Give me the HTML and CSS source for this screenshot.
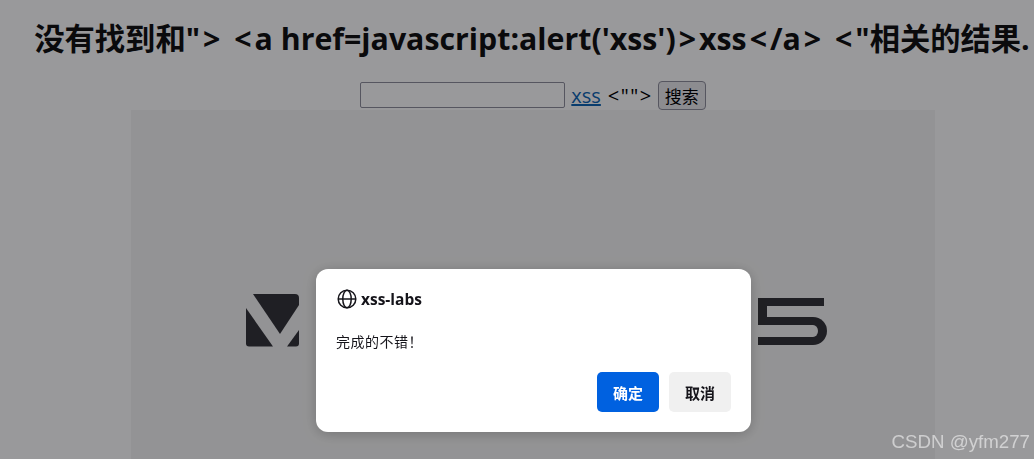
FILE: index.html
```html
<!DOCTYPE html>
<html lang="zh-CN">
<head>
    <meta charset="UTF-8">
    <meta name="viewport" content="width=device-width, initial-scale=1.0">
    <title>xss-labs</title>
    <link rel="stylesheet" href="styles.css">
</head>
<body>
    <h1 class="result-title">没有找到和"<span class="sym">&gt;</span> <span class="sym">&lt;</span>a href=javascript:alert('xss')<span class="sym">&gt;</span>xss<span class="sym">&lt;</span>/a<span class="sym">&gt;</span> <span class="sym">&lt;</span>"相关的结果.</h1>

    <form class="search-row">
        <input class="search-input" type="text">
        <a href="#" class="search-link">xss</a>
        <span class="search-rest">&lt;""&gt;</span>
        <button class="search-button" type="button">搜索</button>
    </form>

    <div class="banner">
        <div class="banner-logo">
            <svg class="logo-mark" width="53" height="53" viewBox="0 0 53 53" aria-hidden="true">
                <path d="M7 0H49Q53 0 53 4V11L34 40Z"/>
                <path d="M0 14L27 52.500H3Q0 52.500 0 49.500Z"/>
                <path d="M53 36V49.500Q53 52.500 50 52.500H41Z"/>
            </svg>
            <div class="logo-end">
                <div class="logo-end-top"></div>
                <div class="logo-end-bottom"></div>
            </div>
        </div>
    </div>

    <!-- alert dialog and the dimmed page behind it -->
    <div class="overlay"></div>
    <div class="dialog">
        <div class="dialog-head">
            <svg class="globe" width="20" height="20" viewBox="0 0 20 20" aria-hidden="true">
                <circle cx="10" cy="10" r="8.800"/>
                <ellipse cx="10" cy="10" rx="4.200" ry="8.800"/>
                <path d="M1.200 10H18.800"/>
            </svg>
            <span class="dialog-title">xss-labs</span>
        </div>
        <p class="dialog-text">完成的不错！</p>
        <div class="dialog-actions">
            <button class="dialog-button primary" type="button">确定</button>
            <button class="dialog-button" type="button">取消</button>
        </div>
    </div>

    <div class="watermark">CSDN @yfm277</div>
</body>
</html>
```

FILE: styles.css
```css
html {
    height: 100%;
}

body {
    box-sizing: border-box;
    height: 100%;
    margin: 0;
    padding: 1px 0 0 32px;
    overflow: hidden;
    background-color: #fff;
    color: #000;
    font-family: "Open Sans", "Noto Sans CJK SC", sans-serif;
}

.result-title {
    margin: 16px 2px 0 0;
    font-size: 30.300px;
    font-weight: 700;
    line-height: 44px;
    text-align: center;
    white-space: nowrap;
    color: #111;
}

.result-title .sym {
    padding: 0 3px;
}

.search-row {
    display: flex;
    justify-content: center;
    align-items: center;
    height: 29px;
    margin-top: 20px;
    font-size: 20px;
}

.search-input {
    box-sizing: border-box;
    width: 205px;
    height: 26px;
    margin: 0 6px 1px 0;
    border: 1px solid #8f8f9d;
    border-radius: 2px;
    background-color: #fff;
}

.search-link {
    margin-right: 7px;
    color: #0f67b5;
}

.search-rest {
    margin-right: 5px;
    letter-spacing: 1.500px;
}

.search-button {
    box-sizing: border-box;
    width: 48px;
    height: 29px;
    padding: 0;
    border: 1px solid #8f8f9d;
    border-radius: 4px;
    background-color: #e9e9ed;
    color: #000;
    font-family: "Noto Sans CJK SC", sans-serif;
    font-size: 17px;
}

.banner {
    width: 804px;
    height: 349px;
    margin: 0 auto;
    background-color: #f6f6f6;
}

.banner-logo {
    display: flex;
    justify-content: space-between;
    padding: 184px 108px 0 115px;
}

.logo-mark path {
    fill: #35353a;
}

.logo-end {
    width: 69px;
    margin-top: 4px;
}

.logo-end-top {
    box-sizing: border-box;
    width: 66px;
    height: 19px;
    border-top: 8px solid #35353a;
    border-left: 9px solid #35353a;
}

.logo-end-bottom {
    box-sizing: border-box;
    height: 28px;
    border-top: 8px solid #35353a;
    border-right: 9px solid #35353a;
    border-bottom: 8px solid #35353a;
    border-radius: 0 14px 14px 0;
}

.overlay {
    position: fixed;
    inset: 0;
    background-color: rgba(0, 0, 5, 0.4);
}

.dialog {
    position: fixed;
    top: 269px;
    left: 316px;
    box-sizing: border-box;
    width: 435px;
    height: 163px;
    padding: 20px;
    border-radius: 12px;
    background-color: #fff;
    box-shadow: 0 2px 14px rgba(0, 0, 0, 0.22);
    color: #15141a;
}

.dialog-head {
    display: flex;
    align-items: center;
    gap: 4px;
    height: 20px;
}

.globe {
    flex: none;
    margin-left: 1px;
}

.globe circle,
.globe ellipse,
.globe path {
    fill: none;
    stroke: #15141a;
    stroke-width: 1.500;
}

.dialog-title {
    font-size: 15.500px;
    font-weight: 700;
}

.dialog-text {
    margin: 23px 0 0;
    font-size: 14px;
    letter-spacing: 0.500px;
    line-height: 20px;
}

.dialog-actions {
    display: flex;
    justify-content: flex-end;
    gap: 10px;
    margin-top: 20px;
}

.dialog-button {
    width: 62px;
    height: 40px;
    padding: 0;
    border: none;
    border-radius: 5px;
    background-color: #f0f0f0;
    color: #15141a;
    font-family: "Noto Sans CJK SC", sans-serif;
    font-size: 15px;
    font-weight: 700;
}

.dialog-button.primary {
    background-color: #0061e0;
    color: #fff;
}

.watermark {
    position: fixed;
    right: 4px;
    bottom: 6px;
    font-family: "Liberation Sans", sans-serif;
    font-size: 18.700px;
    color: rgba(255, 255, 255, 0.55);
}
```
